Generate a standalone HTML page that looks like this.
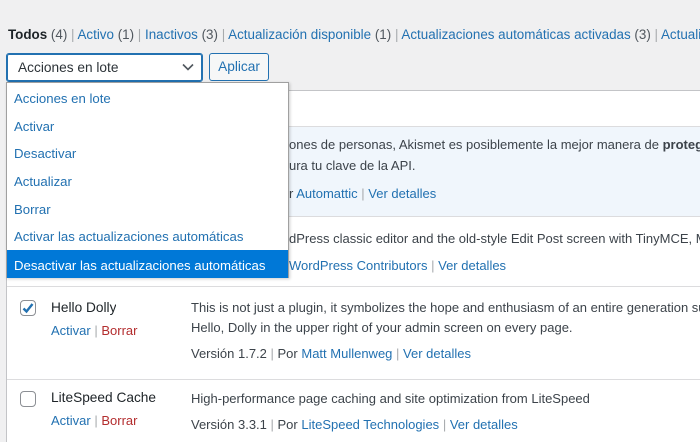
<!DOCTYPE html>
<html><head><meta charset="utf-8"><style>
*{margin:0;padding:0;box-sizing:border-box}
html,body{width:700px;height:442px;overflow:hidden}
body{background:#f0f0f1;font-family:"Liberation Sans",sans-serif;font-size:13px;color:#3c434a;position:relative}
a{color:#2271b1;text-decoration:none}
.a{position:absolute;white-space:nowrap;overflow:hidden}
.sep{color:#a7aaad}
.gray{color:#50575e}
.tbl{position:absolute;left:6px;top:90px;width:694px;height:352px;background:#fff;border:1px solid #c3c4c7;border-right:none;border-bottom:none}
.row{position:absolute;left:0;right:0;border-top:1px solid #dcdcde}
.cb{position:absolute;left:14px;width:16px;height:16px;border:1px solid #8c8f94;border-radius:4px;background:#fff}
.red{color:#b32d2e}
.dd{position:absolute;left:6px;top:82px;width:283px;height:196px;background:#fff;border:1px solid #a0a0a0;box-shadow:1px 1px 3px rgba(0,0,0,.2)}
.it{position:absolute;left:7px;font-size:13.2px;color:#2271b1}
</style></head><body>
<div class="a" style="left:8px;top:27px;width:692px;font-size:13.4px"><b style="color:#1d2327">Todos</b> <span class="gray">(4)</span> <span class="sep">|</span> <a>Activo</a> <span class="gray">(1)</span> <span class="sep">|</span> <a>Inactivos</a> <span class="gray">(3)</span> <span class="sep">|</span> <a>Actualización disponible</a> <span class="gray">(1)</span> <span class="sep">|</span> <a>Actualizaciones automáticas activadas</a> <span class="gray">(3)</span> <span class="sep">|</span> <a>Actualizaciones</a></div>
<div class="a" style="left:6px;top:53px;width:197px;height:29px;border:1px solid #2271b1;border-radius:3px;background:#fff;box-shadow:0 0 0 1px #2271b1 inset"></div>
<div class="a" style="left:18px;top:60px;font-size:13.7px;color:#2c3338">Acciones en lote</div>
<svg class="a" style="left:182px;top:63px" width="12" height="8" viewBox="0 0 12 8"><path d="M1 1.5L6 6.5L11 1.5" stroke="#50575e" stroke-width="1.6" fill="none"/></svg>
<div class="a" style="left:209px;top:53px;width:60px;height:28px;border:1px solid #2271b1;border-radius:3px;background:#f6f7f7;color:#2271b1;font-size:13.7px;text-align:center;line-height:26px">Aplicar</div>

<div class="tbl">
 <div class="row" style="top:35px;height:90px;background:#f0f6fc;border-left:4px solid #72aee6;left:-1px"></div>
 <div class="row" style="top:125px;height:70px"></div>
 <div class="row" style="top:195px;height:93px"></div>
 <div class="row" style="top:288px;height:80px"></div>
</div>
<div class="a" style="left:289px;top:137px;width:411px">ones de personas, Akismet es posiblemente la mejor manera de <b>protegerte</b></div>
<div class="a" style="left:289px;top:158px">ura tu clave de la API.</div>
<div class="a" style="left:289px;top:186px">r <a>Automattic</a> <span class="sep">|</span> <a>Ver detalles</a></div>
<div class="a" style="left:289px;top:231px;width:411px">dPress classic editor and the old-style Edit Post screen with TinyMCE, Meta</div>
<div class="a" style="left:289px;top:258px"><a>WordPress Contributors</a> <span class="sep">|</span> <a>Ver detalles</a></div>

<div class="cb" style="left:20px;top:300px"></div>
<svg class="a" style="left:21px;top:301px" width="14" height="14" viewBox="0 0 14 14"><path d="M2.5 7.5L5.5 10.5L11.5 3" stroke="#2271b1" stroke-width="2.4" fill="none"/></svg>
<div class="a" style="left:51px;top:300px;font-size:13.7px;color:#1d2327">Hello Dolly</div>
<div class="a" style="left:51px;top:323px"><a>Activar</a> <span class="sep">|</span> <span class="red">Borrar</span></div>
<div class="a" style="left:191px;top:300px;width:509px">This is not just a plugin, it symbolizes the hope and enthusiasm of an entire generation sum</div>
<div class="a" style="left:191px;top:320px">Hello, Dolly in the upper right of your admin screen on every page.</div>
<div class="a" style="left:191px;top:346px">Versión 1.7.2 <span class="sep">|</span> Por <a>Matt Mullenweg</a> <span class="sep">|</span> <a>Ver detalles</a></div>

<div class="cb" style="left:20px;top:391px"></div>
<div class="a" style="left:51px;top:390px;font-size:13.7px;color:#1d2327">LiteSpeed Cache</div>
<div class="a" style="left:51px;top:413px"><a>Activar</a> <span class="sep">|</span> <span class="red">Borrar</span></div>
<div class="a" style="left:191px;top:391px">High-performance page caching and site optimization from LiteSpeed</div>
<div class="a" style="left:191px;top:417px">Versión 3.3.1 <span class="sep">|</span> Por <a>LiteSpeed Technologies</a> <span class="sep">|</span> <a>Ver detalles</a></div>

<div class="dd">
 <div class="it" style="top:8px">Acciones en lote</div>
 <div class="it" style="top:36px">Activar</div>
 <div class="it" style="top:63px">Desactivar</div>
 <div class="it" style="top:91px">Actualizar</div>
 <div class="it" style="top:119px">Borrar</div>
 <div class="it" style="top:146px">Activar las actualizaciones automáticas</div>
 <div style="position:absolute;left:0;right:0;top:167px;height:28px;background:#0078d7"></div>
 <div class="it" style="top:175px;color:#fff">Desactivar las actualizaciones automáticas</div>
</div>
</body></html>
